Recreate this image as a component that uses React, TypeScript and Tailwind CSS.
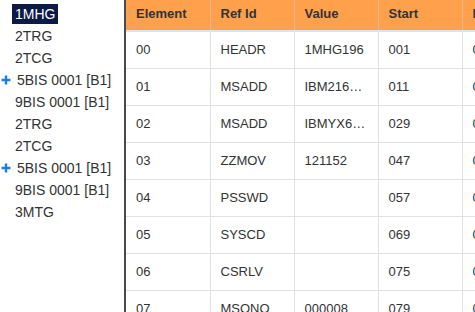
import React from "react";

const tree = [
  { label: "1MHG", selected: true },
  { label: "2TRG" },
  { label: "2TCG" },
  { label: "5BIS 0001 [B1]", plus: true },
  { label: "9BIS 0001 [B1]" },
  { label: "2TRG" },
  { label: "2TCG" },
  { label: "5BIS 0001 [B1]", plus: true },
  { label: "9BIS 0001 [B1]" },
  { label: "3MTG" },
];

const rows = [
  ["00", "HEADR", "1MHG196", "001", "010"],
  ["01", "MSADD", "IBM216MSGADDRESS", "011", "028"],
  ["02", "MSADD", "IBMYX6MSGADDRESS", "029", "046"],
  ["03", "ZZMOV", "121152", "047", "056"],
  ["04", "PSSWD", "", "057", "068"],
  ["05", "SYSCD", "", "069", "074"],
  ["06", "CSRLV", "", "075", "078"],
  ["07", "MSONO", "000008", "079", "084"],
];

function Plus() {
  return (
    <svg width="10" height="10" viewBox="0 0 10 10" className="shrink-0">
      <path d="M5 0.5V9.5M0.5 5H9.5" stroke="#1a7fe0" strokeWidth="2.4" />
    </svg>
  );
}

export default function App() {
  return (
    <div className="flex h-[312px] w-[475px] overflow-hidden bg-white font-['Liberation_Sans',Arial,sans-serif] text-[#333]">
      <div className="w-[126px] shrink-0 border-r-2 border-[#4a4a4a] pt-[3px]">
        {tree.map((t, i) => (
          <div key={i} className="flex h-[22px] items-center text-[14px] leading-[20px]">
            {t.plus ? (
              <div className="flex items-center gap-[6px] pl-[1px]">
                <Plus />
                <span>{t.label}</span>
              </div>
            ) : (
              <span
                className={
                  t.selected
                    ? "ml-[12px] bg-[#0c1a45] px-[3px] text-white"
                    : "ml-[15px]"
                }
              >
                {t.label}
              </span>
            )}
          </div>
        ))}
      </div>
      <div className="min-w-0 flex-1 overflow-hidden">
        <table className="w-[420px] table-fixed border-collapse text-[13px]">
          <colgroup>
            <col className="w-[84px]" />
            <col className="w-[84px]" />
            <col className="w-[84px]" />
            <col className="w-[84px]" />
            <col className="w-[84px]" />
          </colgroup>
          <thead>
            <tr className="h-[31px] bg-[#ffa04c] text-left font-bold">
              {["Element", "Ref Id", "Value", "Start", "End"].map((h) => (
                <th
                  key={h}
                  className="border-x border-b-2 border-x-[#f0b58a] border-b-[#dee2e6] px-[10px] pb-[2px] font-bold first:border-l-0"
                >
                  {h}
                </th>
              ))}
            </tr>
          </thead>
          <tbody>
            {rows.map((r) => (
              <tr key={r[0]} className="h-[37px]">
                {r.map((c, j) => (
                  <td
                    key={j}
                    className="truncate border border-[#dee2e6] px-[10px] first:border-l-0"
                  >
                    {j === 2 && c.length > 7 ? c.slice(0, 6) + "…" : c}
                  </td>
                ))}
              </tr>
            ))}
          </tbody>
        </table>
      </div>
    </div>
  );
}
